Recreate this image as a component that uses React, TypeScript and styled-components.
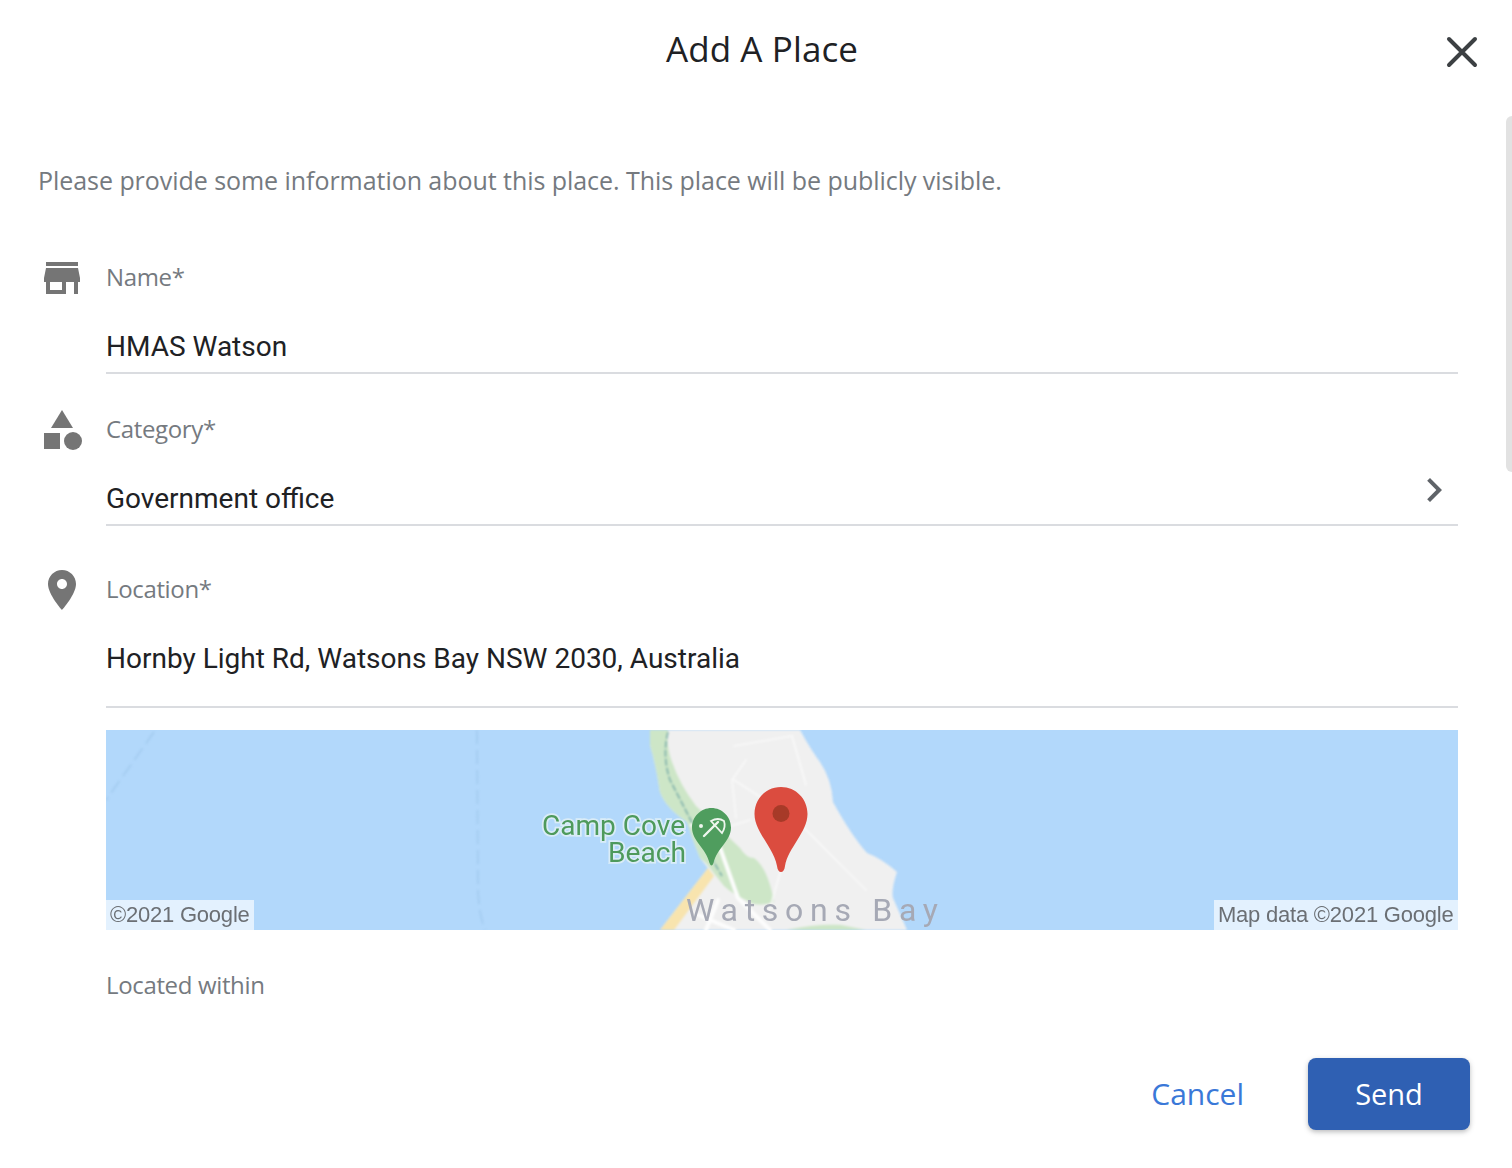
import React from "react";
import styled, { createGlobalStyle } from "styled-components";

const Global = createGlobalStyle`
  html, body { margin: 0; padding: 0; background: #fff; }
  body { font-family: "Roboto", "Liberation Sans", sans-serif; overflow: hidden; }
`;

const Dialog = styled.div`
  position: relative;
  width: 1512px;
  height: 1168px;
  overflow: hidden;
  background: #fff;
`;

const Header = styled.header`
  height: 96px;
  padding-bottom: 4px;
  display: flex;
  justify-content: center;
  align-items: center;
  padding-left: 12px;
`;

const Title = styled.h1`
  margin: 0;
  font-family: "Open Sans", sans-serif;
  font-size: 35px;
  font-weight: 400;
  color: #202124;
  letter-spacing: 0.1px;
`;

const Close = styled.button`
  position: absolute;
  left: 1438px;
  top: 28px;
  width: 48px;
  height: 48px;
  padding: 0;
  border: 0;
  background: none;
  display: flex;
  align-items: center;
  justify-content: center;
`;

const Scrollbar = styled.div`
  position: absolute;
  left: 1506px;
  top: 116px;
  width: 12px;
  height: 356px;
  border-radius: 6px;
  background: #e2e2e2;
`;

const Body = styled.main`
  padding: 0 54px 0 38px;
`;

const Intro = styled.p`
  margin: 61px 0 55px;
  height: 38px;
  line-height: 38px;
  font-family: "Open Sans", sans-serif;
  font-size: 25px;
  letter-spacing: -0.05px;
  color: #757a7f;
`;

const Field = styled.section<{ $gap: number }>`
  display: grid;
  grid-template-columns: 48px 1fr;
  column-gap: 20px;
  margin-bottom: ${(p) => p.$gap}px;
`;

const FieldIcon = styled.svg`
  width: 48px;
  height: 48px;
  fill: #757575;
  display: block;
`;

const Content = styled.div`
  min-width: 0;
`;

const Label = styled.div`
  height: 48px;
  line-height: 46px;
  font-family: "Open Sans", sans-serif;
  font-size: 24px;
  letter-spacing: -0.35px;
  color: #757a7f;
`;

const Value = styled.div<{ $height: number }>`
  position: relative;
  height: ${(p) => p.$height}px;
  box-sizing: border-box;
  padding-top: 28px;
  line-height: 34px;
  font-size: 28px;
  letter-spacing: 0;
  color: #202124;
  border-bottom: 2px solid #dadce0;
`;

const Chevron = styled.svg`
  position: absolute;
  right: 0;
  top: 12px;
  width: 48px;
  height: 48px;
  fill: #5f6368;
`;

const MapFrame = styled.div`
  position: relative;
  margin-top: 22px;
  height: 200px;
  overflow: hidden;
  background: #b2d8fb;
`;

const MapSvg = styled.svg`
  display: block;
  width: 100%;
  height: 100%;
`;

const Attribution = styled.div<{ $side: "left" | "right"; $width: number }>`
  position: absolute;
  bottom: 0;
  ${(p) => p.$side}: 0;
  width: ${(p) => p.$width}px;
  height: 30px;
  box-sizing: border-box;
  padding: 0 0 0 4px;
  line-height: 30px;
  white-space: nowrap;
  font-family: "Liberation Sans", Arial, sans-serif;
  font-size: 22px;
  letter-spacing: -0.22px;
  color: #6b6f74;
  background: #e3f1fe;
  filter: blur(0.6px);
`;

const Within = styled.div`
  margin: 40px 0 58px 68px;
  height: 30px;
  line-height: 30px;
  font-family: "Open Sans", sans-serif;
  font-size: 24px;
  letter-spacing: -0.35px;
  color: #757a7f;
`;

const Footer = styled.footer`
  display: flex;
  justify-content: flex-end;
  align-items: center;
  gap: 64px;
  margin-right: -12px;
`;

const CancelButton = styled.button`
  padding: 0 0 2px;
  border: 0;
  background: none;
  font-family: "Open Sans", sans-serif;
  font-size: 30px;
  color: #3a78d8;
`;

const SendButton = styled.button`
  width: 162px;
  height: 72px;
  padding: 0 0 2px;
  border: 0;
  border-radius: 8px;
  background: #2f60b3;
  box-shadow: 0 2px 5px rgba(60, 64, 67, 0.35);
  font-family: "Open Sans", sans-serif;
  font-size: 29px;
  color: #fff;
`;

const WaterMap = () => (
  <MapSvg viewBox="0 0 1352 200">
    <g style={{ filter: "blur(0.9px)" }}>
      <path d="M48 2 L0 70" stroke="#a3cbef" strokeWidth="1.6" strokeDasharray="14 6" fill="none" />
      <path d="M371 0 L372 160 Q373 185 379 200" stroke="#a3cbef" strokeWidth="1.6" strokeDasharray="14 6" fill="none" />
      <path
        d="M544 0 L694 0 Q705 20 714 32 Q726 50 727 72 Q745 105 761 123 Q775 128 791 142 Q785 160 787 168 L801 200 L554 200 L602 138 L594 128 Q585 105 581 92 Q560 78 554 62 Q550 35 544 15 Z"
        fill="#f0f0f0"
      />
      <path
        d="M544 0 L562 0 Q560 15 566 32 Q574 55 590 76 L634 118 Q640 128 648 128 Q662 138 668 172 Q650 178 640 170 Q628 165 618 156 L600 133 L594 128 Q585 105 581 92 Q560 78 554 62 Q550 35 544 15 Z"
        fill="#cde6c7"
      />
      <path d="M680 200 Q710 194 735 195 L760 200 Z" fill="#cde6c7" />
      <path d="M602 138 L554 200 L568 200 L608 146 Z" fill="#f8e4ae" />
      <g stroke="#fdfdfd" fill="none" strokeLinecap="round">
        <path d="M586 95 L612 112 L632 168 L664 200" strokeWidth="4" />
        <path d="M590 184 L628 200 M612 170 L600 200" strokeWidth="4" />
      </g>
      <g stroke="#f9f9f9" fill="none" strokeLinecap="round">
        <path d="M640 30 L626 50 L628 68 L630 88 M628 50 L690 90 L760 160" strokeWidth="1.6" />
        <path d="M612 100 L644 90 M676 136 L662 185" strokeWidth="1.6" />
        <path d="M628 16 L686 6 L700 55" strokeWidth="1.6" />
      </g>
      <path d="M562 2 Q556 26 564 50 L596 112 L616 146" stroke="#7fb0aa" strokeWidth="1.6" strokeDasharray="7 2" fill="none" />
    </g>
    <g style={{ filter: "blur(0.4px)" }}>
      <path
        d="M605.5 78 C595 78 586 86.5 586 97.5 C586 111 600 118 603.5 133 Q605.5 138 607.5 133 C611 118 625 111 625 97.5 C625 86.5 616 78 605.5 78 Z"
        fill="#4f9d5e"
      />
      <g stroke="#eef6ee" fill="none" strokeLinecap="round">
        <path d="M598 106 L612 92" strokeWidth="2.4" />
        <path d="M605 91 Q612 87 618 91 Q620 97 616 103 Z" strokeWidth="1.8" />
      </g>
      <circle cx="595" cy="96" r="2" fill="#eef6ee" />
      <path
        d="M675 57 C660 57 648.5 69 648.5 84 C648.5 102 668 118 671 136 C671.5 140 673 142 675 142 C677 142 678.5 140 679 136 C682 118 701.5 102 701.5 84 C701.5 69 690 57 675 57 Z"
        fill="#db4c3f"
      />
      <circle cx="675" cy="83.5" r="8.5" fill="#a73a28" />
    </g>
    <g style={{ filter: "blur(0.5px)", paintOrder: "stroke" }} fontFamily="Roboto, sans-serif">
      <g stroke="#e4f1f6" strokeWidth="3.5" strokeOpacity="0.8">
        <text x="436" y="105" fontSize="28" fill="#4e9a5c" textLength="143" lengthAdjust="spacingAndGlyphs">Camp Cove</text>
        <text x="502" y="132" fontSize="28" fill="#4e9a5c" textLength="78" lengthAdjust="spacingAndGlyphs">Beach</text>
      </g>
      <text x="580" y="191" fontSize="32" fill="#a6a9b5" letterSpacing="6.7">Watsons Bay</text>
    </g>
  </MapSvg>
);

export default function App() {
  return (
    <Dialog>
      <Global />
      <Header>
        <Title>Add A Place</Title>
        <Close aria-label="Close">
          <svg width="48" height="48" viewBox="0 0 48 48">
            <path d="M11 11 L37 37 M37 11 L11 37" stroke="#3c4043" strokeWidth="4" strokeLinecap="round" />
          </svg>
        </Close>
      </Header>
      <Scrollbar />
      <Body>
        <Intro>Please provide some information about this place. This place will be publicly visible.</Intro>
        <Field $gap={32}>
          <FieldIcon viewBox="0 0 24 24">
            <path d="M20 4H4v2h16V4zm1 10v-2l-1-5H4l-1 5v2h1v6h10v-6h4v6h2v-6h1zm-9 4H6v-4h6v4z" />
          </FieldIcon>
          <Content>
            <Label>Name*</Label>
            <Value $height={72}>HMAS Watson</Value>
          </Content>
        </Field>
        <Field $gap={40}>
          <FieldIcon viewBox="0 0 24 24">
            <path d="M12 2l-5.5 9h11z" />
            <circle cx="17.5" cy="17.5" r="4.5" />
            <path d="M3 13.5h8v8H3z" />
          </FieldIcon>
          <Content>
            <Label>Category*</Label>
            <Value $height={72}>
              Government office
              <Chevron viewBox="0 0 24 24">
                <path d="M10 6L8.59 7.41 13.17 12l-4.58 4.59L10 18l6-6z" />
              </Chevron>
            </Value>
          </Content>
        </Field>
        <Field $gap={0}>
          <FieldIcon viewBox="0 0 24 24">
            <path d="M12 2C8.13 2 5 5.13 5 9c0 5.25 7 13 7 13s7-7.75 7-13c0-3.87-3.13-7-7-7zm0 9.5c-1.38 0-2.5-1.12-2.5-2.5s1.12-2.5 2.5-2.5 2.5 1.12 2.5 2.5-1.12 2.5-2.5 2.5z" />
          </FieldIcon>
          <Content>
            <Label>Location*</Label>
            <Value $height={94}>Hornby Light Rd, Watsons Bay NSW 2030, Australia</Value>
            <MapFrame>
              <WaterMap />
              <Attribution $side="left" $width={148}>©2021 Google</Attribution>
              <Attribution $side="right" $width={244}>Map data ©2021 Google</Attribution>
            </MapFrame>
          </Content>
        </Field>
        <Within>Located within</Within>
        <Footer>
          <CancelButton>Cancel</CancelButton>
          <SendButton>Send</SendButton>
        </Footer>
      </Body>
    </Dialog>
  );
}
